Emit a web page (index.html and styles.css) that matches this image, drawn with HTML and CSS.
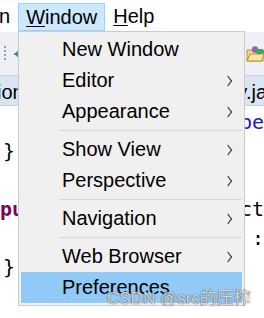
FILE: index.html
```html
<!DOCTYPE html>
<html lang="en">
<head>
    <meta charset="UTF-8">
    <title>Window menu</title>
    <link rel="stylesheet" href="styles.css">
</head>
<body>
    <div class="screen">
        <div class="menubar">
            <span class="menubar-item cut">n</span>
            <span class="menubar-item active"><u>W</u>indow</span>
            <span class="menubar-item"><u>H</u>elp</span>
        </div>

        <div class="toolbar">
            <span class="grip"></span>
            <svg class="tool-icon" width="10" height="18" viewBox="0 0 10 18">
                <path d="M2 9 L8 3 M2 9 L8 15 M0 9 H9" stroke="#3f8f86" stroke-width="2" fill="none"/>
            </svg>
            <span class="spacer"></span>
            <svg class="folder" width="18" height="18" viewBox="0 0 18 18">
                <path d="M1 5 H6 L8 7 H17 V16 H1 Z" fill="#f3d98f" stroke="#b98f36" stroke-width="1"/>
                <path d="M1 16 L4 9 H18 L16 16 Z" fill="#f7e3a4" stroke="#b98f36" stroke-width="1"/>
                <circle cx="9" cy="4.5" r="3.2" fill="#8a64c8"/>
                <rect x="10" y="4" width="8" height="5" rx="2" fill="#3ba55c"/>
            </svg>
        </div>

        <div class="tabbar">
            <span class="tab-text">ion</span>
            <span class="spacer"></span>
            <span class="tab-text">y.ja</span>
        </div>

        <div class="editor">
            <div class="code-line"><span></span><span class="kw-blue">ype</span></div>
            <div class="code-line"><span>}</span><span></span></div>
            <div class="code-line"><span></span><span></span></div>
            <div class="code-line"><span class="kw-purple">pu</span><span>ect</span></div>
            <div class="code-line"><span></span><span><span class="kw-blue">e</span> :</span></div>
            <div class="code-line"><span>}</span><span></span></div>
        </div>

        <div class="menu">
            <div class="menu-item">New Window</div>
            <div class="menu-item">Editor<span class="chev"></span></div>
            <div class="menu-item">Appearance<span class="chev"></span></div>
            <div class="menu-sep"></div>
            <div class="menu-item">Show View<span class="chev"></span></div>
            <div class="menu-item">Perspective<span class="chev"></span></div>
            <div class="menu-sep"></div>
            <div class="menu-item">Navigation<span class="chev"></span></div>
            <div class="menu-sep"></div>
            <div class="menu-item">Web Browser<span class="chev"></span></div>
            <div class="menu-item selected">Preferences</div>
        </div>

        <div class="watermark">CSDN @src的压榨</div>
    </div>
</body>
</html>
```

FILE: styles.css
```css
body {
    margin: 0;
    background: #fff;
    font-family: "Liberation Sans", "Noto Sans CJK SC", sans-serif;
}

.screen {
    position: relative;
    width: 264px;
    height: 318px;
    overflow: hidden;
    background: #fff;
}

.menubar {
    height: 32px;
    display: flex;
    align-items: center;
    font-size: 20px;
    color: #000;
}

.menubar-item {
    height: 26px;
    line-height: 26px;
    padding: 0 7px;
    border: 1px solid transparent;
}

.menubar-item.cut {
    margin-left: -9px;
}

.menubar-item.active {
    background: #cce8ff;
    border-color: #99d1ff;
    margin-top: 2px;
}

.menubar-item u {
    text-decoration-thickness: 1px;
    text-underline-offset: 2px;
}

.toolbar {
    height: 43px;
    display: flex;
    align-items: center;
    background: #eef0f6;
    border-bottom: 1px solid #c9d2e2;
}

.grip {
    width: 2px;
    height: 16px;
    margin-left: 4px;
    background: repeating-linear-gradient(#9aa0aa 0 2px, transparent 2px 4px);
}

.tool-icon {
    margin-left: 8px;
}

.spacer {
    flex: 1;
}

.tabbar {
    height: 30px;
    display: flex;
    align-items: center;
    background: #dae5f3;
    border-bottom: 1px solid #c2cede;
    font-size: 20px;
    padding-top: 3px;
    box-sizing: border-box;
}

.tab-text {
    margin-left: -3px;
}

.tab-text:last-child {
    margin-right: -3px;
}

.editor {
    padding-top: 2px;
    font-family: "DejaVu Sans Mono", monospace;
    font-size: 20px;
}

.code-line {
    height: 29px;
    line-height: 29px;
    display: flex;
    justify-content: space-between;
    padding-left: 3px;
}

.kw-blue {
    color: #1515c8;
}

.kw-purple {
    color: #7f0055;
    font-weight: bold;
    margin-left: -3px;
}

.menu {
    position: absolute;
    left: 18px;
    top: 31px;
    width: 221px;
    padding: 2px;
    background: #f0f0f0;
    border: 1px solid #cccccc;
    font-size: 20px;
    color: #000;
}

.menu-item {
    height: 31px;
    line-height: 31px;
    padding-left: 41px;
    display: flex;
    align-items: center;
}

.menu-item.selected {
    background: #91c9f7;
}

.chev {
    margin-left: auto;
    margin-right: 11px;
    width: 5px;
    height: 5px;
    border-top: 1.3px solid #404040;
    border-right: 1.3px solid #404040;
    transform: scaleY(1.3) rotate(45deg);
}

.menu-sep {
    height: 1px;
    margin: 3px 0 3px 38px;
    background: #d7d7d7;
}

.watermark {
    position: absolute;
    left: 107px;
    top: 284px;
    font-size: 17px;
    color: rgba(222, 222, 222, 0.95);
    text-shadow: 0 0 1px rgba(70, 70, 70, 0.9), 0 0 1px rgba(70, 70, 70, 0.6);
    white-space: nowrap;
}
```
